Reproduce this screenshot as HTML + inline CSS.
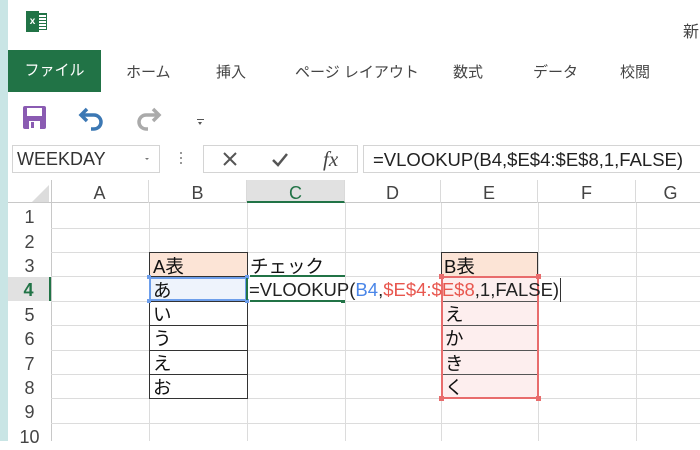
<!DOCTYPE html>
<html><head><meta charset="utf-8"><style>
*{margin:0;padding:0;box-sizing:border-box}
body{width:700px;height:441px;overflow:hidden;background:#fff;position:relative;font-family:"Liberation Sans","Noto Sans CJK JP",sans-serif;color:#222}
.a{position:absolute}
.tab{position:absolute;top:61px;font-size:15px;color:#444}
.ch{position:absolute;top:180px;height:23px;font-size:18px;color:#444;text-align:center;line-height:26px;border-right:1px solid #dadada}
.rh{position:absolute;left:8px;width:43px;font-size:18px;color:#444;text-align:center;line-height:26px}
.hl{position:absolute;left:51px;right:0;height:1px;background:#dcdcdc}
.vl{position:absolute;top:203px;bottom:0;width:1px;background:#dcdcdc}
.c{position:absolute;font-size:18.5px;line-height:25px;padding-left:3px;color:#111}
</style></head><body>
<div class="a" style="left:0;top:0;width:8px;height:441px;background:#c9e5e5"></div>
<!-- excel icon -->
<div class="a" style="left:26px;top:10px;width:22px;height:24px">
<div class="a" style="left:7px;top:3px;width:14px;height:17px;background:#fff;border:1px solid #217346;background-image:repeating-linear-gradient(#217346 0 1px,transparent 1px 3px)"></div>
<div class="a" style="left:0;top:1px;width:13px;height:21px;background:#217346;color:#fff;font-size:10px;font-weight:bold;line-height:21px;text-align:center">x</div>
</div>
<div class="a" style="left:683px;top:18px;font-size:16px;color:#444">新</div>
<!-- tabs -->
<div class="a" style="left:8px;top:50px;width:93px;height:42px;background:#217346;color:#fff;font-size:15px;line-height:42px;text-align:center">ファイル</div>
<div class="tab" style="left:126px">ホーム</div>
<div class="tab" style="left:216px">挿入</div>
<div class="tab" style="left:295px">ページ レイアウト</div>
<div class="tab" style="left:453px">数式</div>
<div class="tab" style="left:533px">データ</div>
<div class="tab" style="left:620px">校閲</div>
<!-- toolbar -->
<svg class="a" style="left:22px;top:105px" width="26" height="26"><rect x="1" y="1" width="23" height="23" rx="2" fill="#8a5bb2"/><rect x="5" y="3" width="15" height="8" fill="#fff"/><rect x="7" y="16" width="11" height="8" fill="#fff"/><rect x="9" y="17" width="3" height="6" fill="#8a5bb2"/></svg>
<svg class="a" style="left:78px;top:104px" width="28" height="28"><path d="M9 5 L3 11 L9 17" fill="none" stroke="#3c78b4" stroke-width="3.5"/><path d="M4 11 H16 A7 7 0 0 1 16 25 H13" fill="none" stroke="#3c78b4" stroke-width="3.5"/></svg>
<svg class="a" style="left:134px;top:104px" width="28" height="28"><path d="M19 5 L25 11 L19 17" fill="none" stroke="#aaa" stroke-width="3.5"/><path d="M24 11 H12 A7 7 0 0 0 12 25 H14" fill="none" stroke="#aaa" stroke-width="3.5"/></svg>
<div class="a" style="left:197px;top:119px;width:7px;height:1px;background:#555"></div>
<div class="a" style="left:198px;top:122px;border-left:2.5px solid transparent;border-right:2.5px solid transparent;border-top:3px solid #555"></div>
<!-- name box -->
<div class="a" style="left:12px;top:145px;width:148px;height:28px;border:1px solid #d4d4d4;font-size:18px;line-height:26px;padding-left:4px;color:#333">WEEKDAY</div>
<div class="a" style="left:145px;top:158px;border-left:2px solid transparent;border-right:2px solid transparent;border-top:2px solid #777"></div>
<div class="a" style="left:180px;top:152px;width:2px;height:14px;background:repeating-linear-gradient(#999 0 2px,transparent 2px 5px)"></div>
<div class="a" style="left:203px;top:145px;width:155px;height:28px;border:1px solid #d4d4d4"></div>
<svg class="a" style="left:221px;top:150px" width="18" height="18"><path d="M3 3 L15 15 M15 3 L3 15" stroke="#555" stroke-width="2"/></svg>
<svg class="a" style="left:270px;top:150px" width="20" height="18"><path d="M3 10 L8 15 L17 4" fill="none" stroke="#555" stroke-width="2.5"/></svg>
<div class="a" style="left:323px;top:146px;font-family:'Liberation Serif',serif;font-style:italic;font-size:21px;line-height:26px;color:#444">fx</div>
<div class="a" style="left:363px;top:145px;width:340px;height:28px;border:1px solid #d4d4d4;font-size:18.5px;line-height:27px;padding-left:9px;color:#222;white-space:nowrap">=VLOOKUP(B4,$E$4:$E$8,1,FALSE)</div>
<!-- grid headers -->
<div class="a" style="left:8px;top:180px;width:692px;height:23px;background:#fff;border-bottom:1px solid #c8c8c8"></div>
<svg class="a" style="left:30px;top:183px" width="20" height="20"><path d="M19 2 L19 19 L2 19 Z" fill="#dcdcdc"/></svg>
<div class="ch" style="left:51px;width:98px">A</div>
<div class="ch" style="left:149px;width:98px">B</div>
<div class="ch" style="left:247px;width:98px;background:#e1e1e1;color:#217346;border-bottom:2px solid #217346">C</div>
<div class="ch" style="left:345px;width:96px">D</div>
<div class="ch" style="left:441px;width:97px">E</div>
<div class="ch" style="left:538px;width:98px">F</div>
<div class="ch" style="left:636px;width:70px">G</div>
<div class="a" style="left:51px;top:180px;width:1px;height:261px;background:#c8c8c8"></div>
<div class="vl" style="left:149px"></div><div class="vl" style="left:247px"></div><div class="vl" style="left:345px"></div><div class="vl" style="left:441px"></div><div class="vl" style="left:538px"></div><div class="vl" style="left:636px"></div>
<div class="hl" style="top:228px"></div><div class="hl" style="top:252px"></div><div class="hl" style="top:276px"></div><div class="hl" style="top:301px"></div><div class="hl" style="top:325px"></div><div class="hl" style="top:350px"></div><div class="hl" style="top:374px"></div><div class="hl" style="top:398px"></div><div class="hl" style="top:423px"></div>
<div class="rh" style="top:204px">1</div>
<div class="rh" style="top:229px">2</div>
<div class="rh" style="top:253px">3</div>
<div class="rh" style="top:277px;background:#e1e1e1;color:#217346;font-weight:bold;border-right:2px solid #217346;height:24px">4</div>
<div class="rh" style="top:302px">5</div>
<div class="rh" style="top:326px">6</div>
<div class="rh" style="top:351px">7</div>
<div class="rh" style="top:375px">8</div>
<div class="rh" style="top:399px">9</div>
<div class="rh" style="top:424px">10</div>
<!-- A table -->
<div class="a" style="left:149px;top:252px;width:98px;height:24px;background:#fce4d6"></div>
<div class="a" style="left:149px;top:252px;width:99px;height:147px;border:1px solid #333"></div>
<div class="a" style="left:149px;top:276px;width:99px;height:1px;background:#333"></div>
<div class="a" style="left:149px;top:301px;width:99px;height:1px;background:#333"></div>
<div class="a" style="left:149px;top:325px;width:99px;height:1px;background:#333"></div>
<div class="a" style="left:149px;top:350px;width:99px;height:1px;background:#333"></div>
<div class="a" style="left:149px;top:374px;width:99px;height:1px;background:#333"></div>
<div class="a" style="left:149px;top:277px;width:98px;height:24px;background:#eef3fc;border:2px solid #6d9eeb"></div>
<div class="a" style="left:147px;top:275px;width:4px;height:4px;background:#6d9eeb"></div>
<div class="a" style="left:245px;top:275px;width:4px;height:4px;background:#6d9eeb"></div>
<div class="a" style="left:147px;top:299px;width:4px;height:4px;background:#6d9eeb"></div>
<div class="a" style="left:245px;top:299px;width:4px;height:4px;background:#6d9eeb"></div>
<div class="c" style="left:150px;top:254px">A表</div>
<div class="c" style="left:150px;top:278px">あ</div>
<div class="c" style="left:150px;top:302px">い</div>
<div class="c" style="left:150px;top:326px">う</div>
<div class="c" style="left:150px;top:351px">え</div>
<div class="c" style="left:150px;top:375px">お</div>
<!-- C -->
<div class="c" style="left:247px;top:254px">チェック</div>
<div class="a" style="left:250px;top:275px;width:95px;height:2px;background:#217346"></div>
<div class="a" style="left:250px;top:300px;width:95px;height:2px;background:#217346"></div>
<div class="a" style="left:246px;top:278px;width:2px;height:22px;background:#217346"></div>
<div class="a" style="left:341px;top:300px;width:4px;height:3px;background:#217346"></div>
<!-- B table -->
<div class="a" style="left:441px;top:252px;width:97px;height:24px;background:#fce4d6;border-left:1px solid #333;border-right:1px solid #333;border-top:1px solid #333"></div>
<div class="c" style="left:441px;top:254px">B表</div>
<div class="a" style="left:441px;top:276px;width:98px;height:123px;background:#fdeeee;border:2px solid #e86c6c"></div>
<div class="a" style="left:443px;top:301px;width:94px;height:1px;background:#555"></div>
<div class="a" style="left:443px;top:325px;width:94px;height:1px;background:#555"></div>
<div class="a" style="left:443px;top:350px;width:94px;height:1px;background:#555"></div>
<div class="a" style="left:443px;top:374px;width:94px;height:1px;background:#555"></div>
<div class="a" style="left:439px;top:274px;width:5px;height:5px;background:#e86c6c"></div>
<div class="a" style="left:536px;top:274px;width:5px;height:5px;background:#e86c6c"></div>
<div class="a" style="left:439px;top:396px;width:5px;height:5px;background:#e86c6c"></div>
<div class="a" style="left:536px;top:396px;width:5px;height:5px;background:#e86c6c"></div>
<div class="c" style="left:442px;top:302px">え</div>
<div class="c" style="left:442px;top:326px">か</div>
<div class="c" style="left:442px;top:351px">き</div>
<div class="c" style="left:442px;top:375px">く</div>
<!-- formula in cell -->
<div class="a" style="left:249px;top:278px;font-size:18.5px;line-height:24px;white-space:nowrap;padding-right:1px;border-right:1px solid #333">=VLOOKUP(<span style="color:#4a86e8">B4</span>,<span style="color:#e8574f">$E$4:$E$8</span>,1,FALSE)</div>
</body></html>
